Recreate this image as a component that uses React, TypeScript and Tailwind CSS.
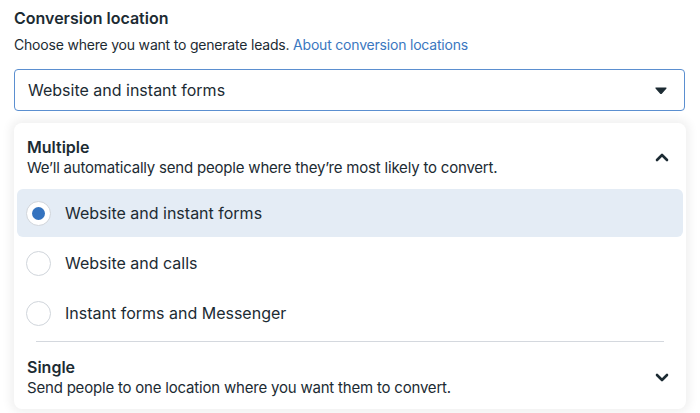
import { useState } from "react"

const options = [
  "Website and instant forms",
  "Website and calls",
  "Instant forms and Messenger",
]

function Chevron({ up }: { up?: boolean }) {
  return (
    <svg width="14" height="9" viewBox="0 0 14 9" className={up ? "rotate-180" : ""}>
      <path d="M2 2 L7 7 L12 2" fill="none" stroke="#1c2b33" strokeWidth="2.6" strokeLinecap="round" strokeLinejoin="round" />
    </svg>
  )
}

function Radio({ checked }: { checked: boolean }) {
  return (
    <span className="flex h-[25px] w-[25px] shrink-0 items-center justify-center rounded-full border-[1.5px] border-[#d0d5db] bg-white">
      {checked && <span className="h-[13px] w-[13px] rounded-full bg-[#3473bf]" />}
    </span>
  )
}

export default function App() {
  const [selected, setSelected] = useState(0)

  return (
    <div
      className="h-[413px] w-[700px] overflow-hidden bg-white text-[#1c2b33]"
      style={{ fontFamily: "Inter, 'Liberation Sans', sans-serif" }}
    >
      <div className="px-[14px] pt-[8px]">
        <h2 className="text-[16px] font-semibold leading-[20px]">Conversion location</h2>
        <p className="mt-[8px] text-[14px] leading-[18px] tracking-[-0.2px] text-[#1c2b33]">
          Choose where you want to generate leads.{" "}
          <a href="#" className="text-[#3a77bf]">About conversion locations</a>
        </p>

        <button className="mt-[15px] flex h-[42px] w-[671px] items-center justify-between rounded-[4px] border-[1.5px] border-[#5b8fd0] bg-white pl-[13px] pr-[17px] text-left">
          <span className="text-[16px]">{options[selected]}</span>
          <svg width="12" height="7" viewBox="0 0 12 7">
            <path d="M1 1 L11 1 L6.6 6 Q6 6.6 5.4 6 Z" fill="#1c2b33" stroke="#1c2b33" strokeWidth="1.2" strokeLinejoin="round" />
          </svg>
        </button>

        <div className="mt-[12px] w-[672px] rounded-[8px] bg-white px-[3px] shadow-[0_0_10px_4px_rgba(0,0,0,0.06)]">
          <div className="flex items-center justify-between pl-[10px] pr-[14px] pt-[13px] pb-[11px]">
            <div>
              <div className="text-[16px] font-semibold leading-[22px]">Multiple</div>
              <div className="text-[15px] leading-[20px] tracking-[-0.2px]">
                We’ll automatically send people where they’re most likely to convert.
              </div>
            </div>
            <Chevron up />
          </div>

          <div className="flex flex-col gap-[2px]">
            {options.map((o, i) => (
              <button
                key={o}
                onClick={() => setSelected(i)}
                className={`flex h-[48px] items-center gap-[14px] rounded-[6px] pl-[9px] text-left text-[16px] ${
                  selected === i ? "bg-[#e4ecf5]" : ""
                }`}
              >
                <Radio checked={selected === i} />
                <span>{o}</span>
              </button>
            ))}
          </div>

          <div className="mx-[19px] mt-[4px] h-px bg-[#d4d8de]" />

          <div className="flex items-center justify-between pl-[10px] pr-[14px] pt-[14px] pb-[11px]">
            <div>
              <div className="text-[16px] font-semibold leading-[22px]">Single</div>
              <div className="text-[15px] leading-[20px] tracking-[-0.2px]">
                Send people to one location where you want them to convert.
              </div>
            </div>
            <Chevron />
          </div>
        </div>
      </div>
    </div>
  )
}
